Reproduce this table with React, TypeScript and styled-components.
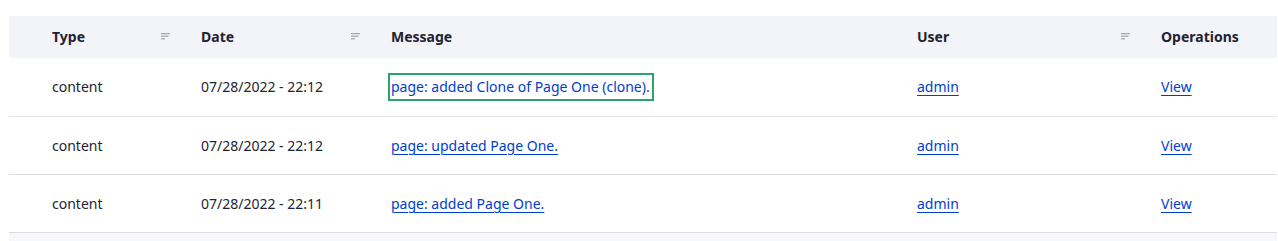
import React from "react";
import styled, { createGlobalStyle } from "styled-components";

const Global = createGlobalStyle`
  html, body { margin: 0; padding: 0; background: #ffffff; }
  body { font-family: "Noto Sans", "Open Sans", sans-serif; color: #222330; }
`;

const Page = styled.div`
  padding: 16px 1px 0 9px;
`;

const Table = styled.table`
  width: 1268px;
  border-collapse: collapse;
  table-layout: fixed;
  font-size: 14px;
`;

const HeadCell = styled.th<{ $w: number; $first?: boolean }>`
  width: ${(p) => p.$w}px;
  height: 42px;
  padding: 0 14px 2px ${(p) => (p.$first ? 43 : 16)}px;
  background: #f3f4f9;
  text-align: left;
  font-weight: 700;
  color: #222330;
  box-sizing: border-box;
`;

const HeadInner = styled.div`
  display: flex;
  align-items: center;
  justify-content: space-between;
`;

const Row = styled.tr<{ $light?: boolean }>`
  border-bottom: 1px solid ${(p) => (p.$light ? "#e4e4e6" : "#dcdcde")};
`;

const Cell = styled.td<{ $first?: boolean }>`
  height: 58px;
  padding: 0 14px 0 ${(p) => (p.$first ? 43 : 16)}px;
  color: #222330;
  box-sizing: border-box;
`;

const Link = styled.a<{ $focus?: boolean }>`
  color: #003ecc;
  text-decoration: underline;
  text-underline-offset: 3px;
  text-decoration-thickness: 1px;
  ${(p) =>
    p.$focus
      ? `display: inline-block; line-height: 24px; outline: 2px solid #2ba36c; outline-offset: 0; text-decoration: none; padding: 0 2px 0 1px; margin-left: -1px;`
      : ""}
`;

const Footer = styled.div`
  width: 1268px;
  height: 20px;
  background: #f6f8fd;
`;

const SortIcon = () => (
  <svg width="10" height="7" viewBox="0 0 10 7" fill="#a0a4b0" aria-hidden>
    <rect x="0" y="0" width="9" height="1.2" />
    <rect x="0" y="2.6" width="7.5" height="1.2" />
    <rect x="0" y="5.2" width="4" height="1.2" />
  </svg>
);

const rows = [
  { type: "content", date: "07/28/2022 - 22:12", msg: "page: added Clone of Page One (clone).", focus: true },
  { type: "content", date: "07/28/2022 - 22:12", msg: "page: updated Page One." },
  { type: "content", date: "07/28/2022 - 22:11", msg: "page: added Page One." },
];

export default function App() {
  return (
    <>
      <Global />
      <Page>
        <Table>
          <thead>
            <tr>
              <HeadCell $w={176} $first>
                <HeadInner>
                  Type <SortIcon />
                </HeadInner>
              </HeadCell>
              <HeadCell $w={190}>
                <HeadInner>
                  Date <SortIcon />
                </HeadInner>
              </HeadCell>
              <HeadCell $w={526}>Message</HeadCell>
              <HeadCell $w={244}>
                <HeadInner>
                  User <SortIcon />
                </HeadInner>
              </HeadCell>
              <HeadCell $w={132}>Operations</HeadCell>
            </tr>
          </thead>
          <tbody>
            {rows.map((r, i) => (
              <Row key={i} $light={i === 0}>
                <Cell $first>{r.type}</Cell>
                <Cell>{r.date}</Cell>
                <Cell>
                  <Link href="#" $focus={r.focus}>
                    {r.msg}
                  </Link>
                </Cell>
                <Cell>
                  <Link href="#">admin</Link>
                </Cell>
                <Cell>
                  <Link href="#">View</Link>
                </Cell>
              </Row>
            ))}
          </tbody>
        </Table>
        <Footer />
      </Page>
    </>
  );
}
